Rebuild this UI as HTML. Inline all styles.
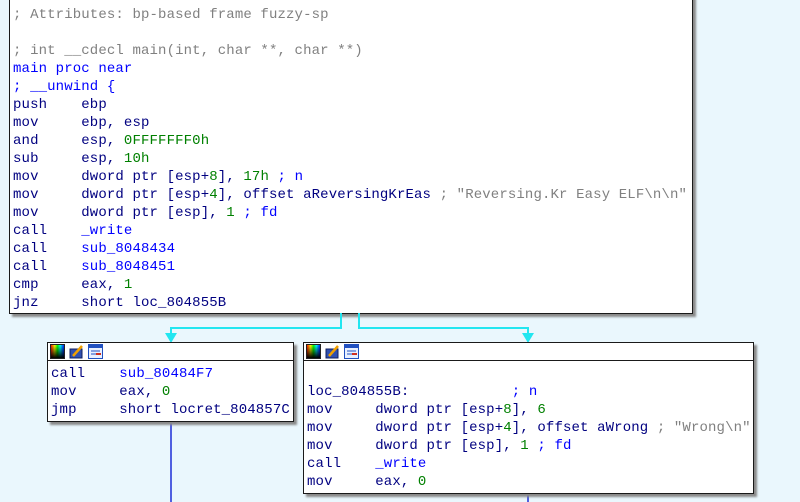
<!DOCTYPE html>
<html><head><style>
body{margin:0;width:800px;height:502px;background:#eaf7fd;position:relative;overflow:hidden;font-family:"Liberation Mono",monospace;font-size:14px;}
.box{position:absolute;background:#fff;border:1px solid #1a1a1a;box-shadow:3px 3px 2px #8a8a8a;}
pre{margin:0;font:inherit;line-height:18px;white-space:pre;color:#000080;letter-spacing:0.13px;}
.c{color:#808080}.b{color:#0000ff}.g{color:#008000}.s{color:#808080}
.hdr{height:17px;border-bottom:1px solid #1a1a1a;position:relative}
.ic{position:absolute;top:1px;width:15px;height:15px}
.l{position:absolute;background:#22e6f0}
</style></head><body>
<div class="box" style="left:9px;top:-10px;width:682px;height:322px;">
<pre style="padding:15px 0 0 3px"><span class="c">; Attributes: bp-based frame fuzzy-sp</span>

<span class="c">; int __cdecl main(int, char **, char **)</span>
<span class="b">main proc near</span>
<span class="b">; __unwind {</span>
push    ebp
mov     ebp, esp
and     esp, <span class="g">0FFFFFFF0h</span>
sub     esp, <span class="g">10h</span>
mov     dword ptr [esp+<span class="g">8</span>], <span class="g">17h</span> <span class="b">; n</span>
mov     dword ptr [esp+<span class="g">4</span>], offset aReversingKrEas <span class="s">; "Reversing.Kr Easy ELF\n\n"</span>
mov     dword ptr [esp], <span class="g">1</span> <span class="b">; fd</span>
call    <span class="b">_write</span>
call    <span class="b">sub_8048434</span>
call    <span class="b">sub_8048451</span>
cmp     eax, <span class="g">1</span>
jnz     short loc_804855B</pre></div>

<div class="l" style="left:340px;top:313px;width:2px;height:16px"></div>
<div class="l" style="left:171px;top:327px;width:171px;height:2px"></div>
<div class="l" style="left:170px;top:327px;width:2px;height:8px"></div>
<svg style="position:absolute;left:165px;top:333px" width="13" height="10"><polygon points="0,0 12,0 6,10" fill="#22e6f0"/></svg>
<div class="l" style="left:358px;top:313px;width:2px;height:16px"></div>
<div class="l" style="left:358px;top:327px;width:171px;height:2px"></div>
<div class="l" style="left:527px;top:327px;width:2px;height:8px"></div>
<svg style="position:absolute;left:522px;top:333px" width="13" height="10"><polygon points="0,0 12,0 6,10" fill="#22e6f0"/></svg>
<div style="position:absolute;left:170px;top:421px;width:2px;height:81px;background:#5060e0"></div>
<div style="position:absolute;left:527px;top:493px;width:2px;height:9px;background:#5060e0"></div>

<svg width="0" height="0" style="position:absolute"><defs><linearGradient id="r" x1="0" x2="1"><stop offset="0" stop-color="#f00"/><stop offset=".3" stop-color="#ff0"/><stop offset=".5" stop-color="#0f0"/><stop offset=".7" stop-color="#0ff"/><stop offset="1" stop-color="#00f"/></linearGradient><linearGradient id="k" y1="0" y2="1" x1="0" x2="0"><stop offset="0" stop-color="#000" stop-opacity="0"/><stop offset="1" stop-color="#000"/></linearGradient></defs></svg>

<div class="box" style="left:47px;top:342px;width:245px;height:78px;">
<div class="hdr">
<svg class="ic" style="left:2px" width="15" height="15"><rect x=".5" y=".5" width="14" height="14" fill="url(#r)" stroke="#222"/><rect x="1" y="1" width="13" height="13" fill="url(#k)"/></svg>
<svg class="ic" style="left:21px" width="15" height="15"><rect x="1" y="5" width="12" height="9" fill="#3050b0" stroke="#102060"/><path d="M4 12 L13 2" stroke="#f0a000" stroke-width="2.5"/></svg>
<svg class="ic" style="left:40px" width="15" height="15"><rect x=".5" y=".5" width="14" height="14" fill="#e8f0ff" stroke="#2050c0"/><rect x="1" y="1" width="13" height="3" fill="#2050c0"/><path d="M3 7h9M3 10h5" stroke="#2050c0"/><path d="M8 10h5" stroke="#d03020" stroke-width="2"/></svg>
</div>
<pre style="padding:4px 0 0 3px">call    <span class="b">sub_80484F7</span>
mov     eax, <span class="g">0</span>
jmp     short locret_804857C</pre></div>

<div class="box" style="left:303px;top:342px;width:449px;height:150px;">
<div class="hdr">
<svg class="ic" style="left:2px" width="15" height="15"><rect x=".5" y=".5" width="14" height="14" fill="url(#r)" stroke="#222"/><rect x="1" y="1" width="13" height="13" fill="url(#k)"/></svg>
<svg class="ic" style="left:21px" width="15" height="15"><rect x="1" y="5" width="12" height="9" fill="#3050b0" stroke="#102060"/><path d="M4 12 L13 2" stroke="#f0a000" stroke-width="2.5"/></svg>
<svg class="ic" style="left:40px" width="15" height="15"><rect x=".5" y=".5" width="14" height="14" fill="#e8f0ff" stroke="#2050c0"/><rect x="1" y="1" width="13" height="3" fill="#2050c0"/><path d="M3 7h9M3 10h5" stroke="#2050c0"/><path d="M8 10h5" stroke="#d03020" stroke-width="2"/></svg>
</div>
<pre style="padding:22px 0 0 3px">loc_804855B:            <span class="b">; n</span>
mov     dword ptr [esp+<span class="g">8</span>], <span class="g">6</span>
mov     dword ptr [esp+<span class="g">4</span>], offset aWrong <span class="s">; "Wrong\n"</span>
mov     dword ptr [esp], <span class="g">1</span> <span class="b">; fd</span>
call    <span class="b">_write</span>
mov     eax, <span class="g">0</span></pre></div>
</body></html>
